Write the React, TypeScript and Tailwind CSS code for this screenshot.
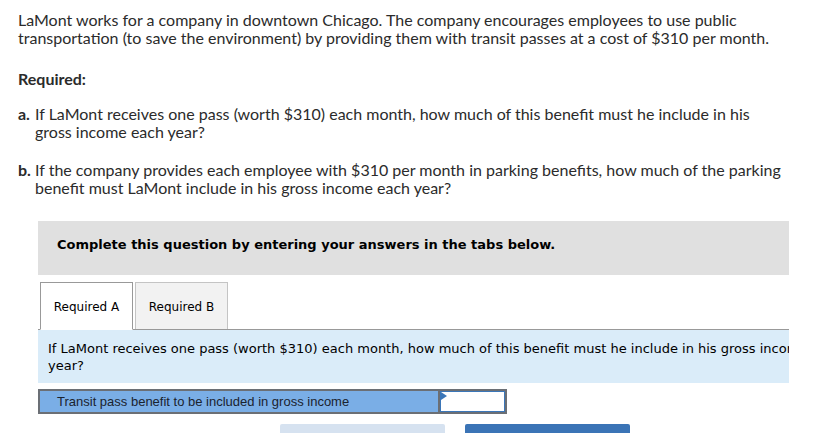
import React from 'react';

export default function App() {
  return (
    <div className="min-h-screen bg-white overflow-hidden">
      <div className="pl-[18px] pt-[11px] text-[16px] leading-[18px] text-[#2b2b2b] font-['Lato',sans-serif]">
        <p>
          LaMont works for a company in downtown Chicago. The company encourages employees to use public
          <br />
          transportation (to save the environment) by providing them with transit passes at a cost of $310 per month.
        </p>

        <p className="mt-[23px] font-bold">Required:</p>

        <div className="mt-[17px] flex">
          <span className="w-[17px] font-bold">a.</span>
          <span>
            If LaMont receives one pass (worth $310) each month, how much of this benefit must he include in his
            <br />
            gross income each year?
          </span>
        </div>

        <div className="mt-[20px] flex">
          <span className="w-[17px] font-bold">b.</span>
          <span>
            If the company provides each employee with $310 per month in parking benefits, how much of the parking
            <br />
            benefit must LaMont include in his gross income each year?
          </span>
        </div>
      </div>

      {/* Question panel */}
      <div className="ml-[38px] w-[751px] mt-[24px] font-['DejaVu_Sans',Verdana,sans-serif]">
        <div className="h-[54px] bg-[#e0e0e0] pl-[19px] pt-[14px] text-[13px] font-bold text-black">
          Complete this question by entering your answers in the tabs below.
        </div>

        <div className="mt-[7px] flex items-end border-b border-[#999] pl-[2px] gap-[2px]">
          <div className="h-[48px] w-[93px] -mb-px border border-[#999] border-b-white bg-white flex items-center justify-center pt-[2px] text-[12px] text-black">
            Required A
          </div>
          <div className="h-[47px] w-[93px] border border-[#c4c4c4] border-b-0 bg-[#f2f2f2] flex items-center justify-center pt-[2px] text-[12px] text-black">
            Required B
          </div>
        </div>

        <div className="h-[53px] bg-[#daecf9] pl-[10px] pt-[10px] text-[13px] leading-[17px] text-black overflow-hidden whitespace-nowrap">
          If LaMont receives one pass (worth $310) each month, how much of this benefit must he include in his gross income each
          <br />
          year?
        </div>

        <div className="mt-[6px] flex h-[25px]">
          <div className="w-[400px] border-2 border-[#6b6f75] border-r-0 bg-[#7aaee6] pl-[17px] flex items-center text-[13px] text-[#1a232e] font-['Liberation_Sans',Arial,sans-serif]">
            Transit pass benefit to be included in gross income
          </div>
          <div className="relative w-[69px] border-2 border-[#6b6f75] bg-white">
            <div className="absolute inset-0 border border-[#3b76b8]" />
            <div className="absolute left-[1px] top-[1px] w-0 h-0 border-t-[4px] border-b-[4px] border-l-[6px] border-t-transparent border-b-transparent border-l-[#3b76b8]" />
          </div>
        </div>

        <div className="mt-[10px] flex">
          <div className="ml-[242px] w-[165px] h-[20px] bg-[#d6e2f0] rounded-t-[2px]" />
          <div className="ml-[20px] w-[165px] h-[20px] bg-[#3b74b6] rounded-t-[2px]" />
        </div>
      </div>
    </div>
  );
}
